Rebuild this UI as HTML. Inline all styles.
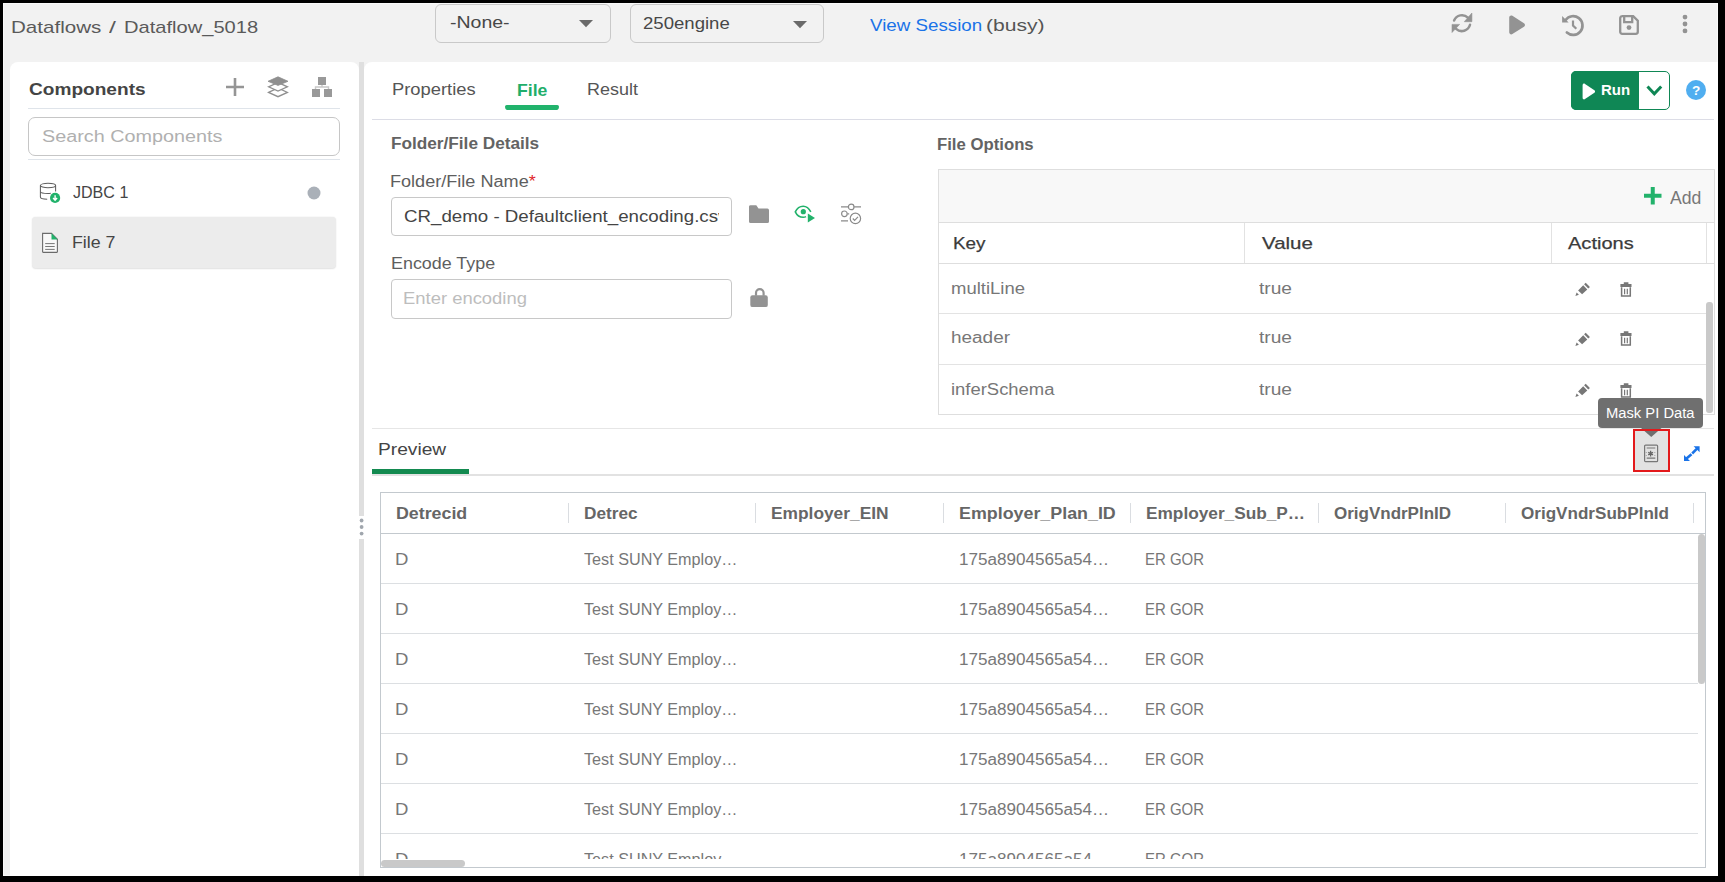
<!DOCTYPE html>
<html><head><meta charset="utf-8"><style>
html,body{margin:0;padding:0;background:#000;width:1725px;height:882px;overflow:hidden;}
body{position:relative;font-family:"Liberation Sans",sans-serif;}
.b{position:absolute;}
.t{position:absolute;white-space:nowrap;transform-origin:0 0;}
</style></head><body>
<div class="b" style="left:3px;top:3px;width:1715px;height:873px;background:#f2f2f2;box-shadow:inset 0 0 0 1px #f9f9f9;"></div>
<div id="t0" class="t " style="left:10.83px;top:17.93px;font-size:17px;line-height:19.55px;color:#5a5a5a;font-weight:400;transform:scaleX(1.2098);">Dataflows</div>
<div id="t1" class="t " style="left:109.40px;top:17.93px;font-size:17px;line-height:19.55px;color:#5a5a5a;font-weight:400;transform:scaleX(1.4583);">/</div>
<div id="t2" class="t " style="left:124.26px;top:17.93px;font-size:17px;line-height:19.55px;color:#5a5a5a;font-weight:400;transform:scaleX(1.1825);">Dataflow_5018</div>
<div class="b" style="left:435px;top:4px;width:176px;height:39px;border:1px solid #c9c9c9;border-radius:6px;box-sizing:border-box;"></div>
<div id="t3" class="t " style="left:449.55px;top:13.96px;font-size:16px;line-height:18.4px;color:#474747;font-weight:400;transform:scaleX(1.2190);">-None-</div>
<svg class="b" style="left:579px;top:20px;" width="14" height="8" viewBox="0 0 14 8"><path d="M0 0H14L7 7.2Z" fill="#6a6a6a"/></svg>
<div class="b" style="left:630px;top:4px;width:194px;height:39px;border:1px solid #c9c9c9;border-radius:6px;box-sizing:border-box;"></div>
<div id="t4" class="t " style="left:642.97px;top:14.76px;font-size:16px;line-height:18.4px;color:#474747;font-weight:400;transform:scaleX(1.1605);">250engine</div>
<svg class="b" style="left:792.5px;top:20.5px;" width="14" height="8" viewBox="0 0 14 8"><path d="M0 0H14L7 7.2Z" fill="#6a6a6a"/></svg>
<div id="t5" class="t " style="left:870.40px;top:16.33px;font-size:17px;line-height:19.55px;color:#1a73e8;font-weight:400;transform:scaleX(1.1024);">View Session</div>
<div id="t6" class="t " style="left:986.46px;top:16.33px;font-size:17px;line-height:19.55px;color:#555;font-weight:400;transform:scaleX(1.2414);">(busy)</div>
<svg class="b" style="left:1450px;top:11px;" width="24" height="24" viewBox="0 0 24 24"><g fill="none" stroke="#939393" stroke-width="2.5" stroke-linecap="round"><path d="M4.1 9.5A8.5 8.5 0 0 1 17.9 6.6"/><path d="M20 13.7A8.5 8.5 0 0 1 6.1 17.9"/></g><path d="M21.9 2V10.7H14.3Z M2 13.4H9.6L2 21.5Z" fill="#939393" stroke="#939393" stroke-width="0.6" stroke-linejoin="round"/></svg>
<svg class="b" style="left:1508px;top:15px;" width="18" height="20" viewBox="0 0 18 20"><path fill="#939393" d="M1.2 2.6C1.2 0.9 3 -0.1 4.4 0.8L16 8.2C17.3 9 17.3 10.9 16 11.7L4.4 19.1C3 20 1.2 19 1.2 17.3Z"/></svg>
<svg class="b" style="left:1561px;top:13.5px;" width="24" height="24" viewBox="0 0 24 24"><g fill="none" stroke="#939393" stroke-width="2.7"><path d="M4.6 6A9.35 9.35 0 1 1 5.9 18.5" stroke-linecap="round"/><path d="M12 6.4V11.5L15.3 14.7" stroke-width="2.2"/></g><path d="M1.1 1.9V8.4H7.6Z" fill="#939393"/></svg>
<svg class="b" style="left:1619px;top:15px;" width="20" height="20" viewBox="0 0 20 20"><g fill="none" stroke="#939393" stroke-width="2.3"><path d="M3 1.2H14.2L18.8 5.8V16.8A2 2 0 0 1 16.8 18.8H3.2A2 2 0 0 1 1.2 16.8V3.2A2 2 0 0 1 3.2 1.2Z"/><path d="M5.2 1.2V7.2H13.2V1.2"/></g><circle cx="10" cy="12.6" r="2.4" fill="#939393"/></svg>
<svg class="b" style="left:1682px;top:14px;" width="6" height="20" viewBox="0 0 6 20"><circle cx="3" cy="3.1" r="2.4" fill="#939393"/><circle cx="3" cy="10" r="2.4" fill="#939393"/><circle cx="3" cy="16.9" r="2.4" fill="#939393"/></svg>
<div class="b" style="left:10px;top:62px;width:349px;height:814px;background:#fff;border-radius:8px 8px 0 0;"></div>
<div id="t7" class="t " style="left:28.53px;top:80.03px;font-size:17px;line-height:19.55px;color:#444;font-weight:700;transform:scaleX(1.1225);">Components</div>
<svg class="b" style="left:226px;top:78px;" width="18" height="18" viewBox="0 0 18 18"><path d="M9 0V18M0 9H18" stroke="#959595" stroke-width="2.6"/></svg>
<svg class="b" style="left:267px;top:76px;" width="22" height="22" viewBox="0 0 22 22"><g stroke="#8f8f8f" stroke-width="1.3" fill="none"><path d="M1.6 16.4L11 12L20.4 16.4L11 20.7Z"/><path d="M1.6 10.8L11 6.5L20.4 10.8L11 15Z" fill="#fff"/></g><path d="M1 5.3L11 0.8L21 5.3L11 9.4Z" fill="#8f8f8f" stroke="#8f8f8f" stroke-width="0.8"/></svg>
<svg class="b" style="left:312px;top:77px;" width="20" height="20" viewBox="0 0 20 20"><path d="M10 8V10M3.5 12V10H16.5V12" stroke="#c8c8c8" stroke-width="1.4" fill="none"/><rect x="6" y="0" width="8" height="8" fill="#999"/><rect x="0" y="12" width="8" height="8" fill="#999"/><rect x="12" y="12" width="8" height="8" fill="#999"/></svg>
<div class="b" style="left:28px;top:108px;width:312px;height:1px;background:#dfe4ea;"></div>
<div class="b" style="left:28px;top:117px;width:312px;height:39px;border:1px solid #c6c6c6;border-radius:7px;box-sizing:border-box;"></div>
<div id="t8" class="t " style="left:41.93px;top:128.36px;font-size:16px;line-height:18.4px;color:#b0b0b0;font-weight:400;transform:scaleX(1.2367);">Search Components</div>
<div class="b" style="left:28px;top:159px;width:312px;height:1px;background:#dfe4ea;"></div>
<svg class="b" style="left:38px;top:181px;" width="26" height="26" viewBox="0 0 26 26"><g fill="none" stroke="#5f5f5f" stroke-width="1.05"><ellipse cx="10" cy="4.5" rx="7.6" ry="2.2"/><path d="M2.4 4.5V15.9C2.4 17.3 5.6 18.1 9.2 18.2M17.6 4.5V10.6M2.4 10.4C2.4 11.8 6 12.4 10 12.4C11 12.4 12 12.3 12.8 12.2"/></g><circle cx="17.1" cy="16.9" r="5.1" fill="#21b26b"/><path d="M17.1 14.2V19M15.1 17.1L17.1 19.2L19.1 17.1" stroke="#fff" stroke-width="1.4" fill="none"/></svg>
<div id="t9" class="t " style="left:73.41px;top:183.33px;font-size:17px;line-height:19.55px;color:#454545;font-weight:400;transform:scaleX(0.9442);">JDBC 1</div>
<svg class="b" style="left:306.5px;top:185.5px;" width="14" height="14" viewBox="0 0 14 14"><circle cx="7" cy="7" r="6.5" fill="#aab0b8"/></svg>
<div class="b" style="left:32px;top:217px;width:304px;height:51px;background:#ececec;border-radius:4px;box-shadow:0 0.5px 1.5px rgba(0,0,0,0.12);"></div>
<svg class="b" style="left:41px;top:232px;" width="18" height="22" viewBox="0 0 18 22"><path d="M1.6 1.4H10.5L16.4 7.3V19.8A0.6 0.6 0 0 1 15.8 20.4H2.2A0.6 0.6 0 0 1 1.6 19.8Z" fill="#f8f8f8" stroke="#6b6b6b" stroke-width="1.1"/><path d="M10.5 1.2V7.4H16.6Z" fill="#21b26b"/><path d="M4.2 11.6H13.7M4.2 14.5H13.7M4.2 17.4H13.7" stroke="#777" stroke-width="1"/></svg>
<div id="t10" class="t " style="left:72.24px;top:233.03px;font-size:17px;line-height:19.55px;color:#454545;font-weight:400;transform:scaleX(1.0453);">File 7</div>
<div class="b" style="left:359px;top:62px;width:5px;height:814px;background:#dfdfdf;"></div>
<div class="b" style="left:359px;top:516px;width:5px;height:23px;background:#fff;"></div>
<svg class="b" style="left:359px;top:517px;" width="5" height="22" viewBox="0 0 5 22"><circle cx="2.6" cy="3.5" r="1.9" fill="#a0a6ad"/><circle cx="2.6" cy="10" r="1.9" fill="#a0a6ad"/><circle cx="2.6" cy="16.6" r="1.9" fill="#a0a6ad"/></svg>
<div class="b" style="left:364px;top:62px;width:1354px;height:814px;background:#fff;border-radius:8px 0 0 0;"></div>
<div id="t11" class="t " style="left:392.31px;top:80.76px;font-size:16px;line-height:18.4px;color:#555;font-weight:400;transform:scaleX(1.1473);">Properties</div>
<div id="t12" class="t " style="left:516.52px;top:81.00px;font-size:16.5px;line-height:18.975px;color:#1fae6a;font-weight:700;transform:scaleX(1.0690);">File</div>
<div id="t13" class="t " style="left:587.24px;top:80.76px;font-size:16px;line-height:18.4px;color:#555;font-weight:400;transform:scaleX(1.1226);">Result</div>
<div class="b" style="left:505px;top:105px;width:54px;height:5px;background:#21b36c;border-radius:2px 2px 4px 4px;"></div>
<div class="b" style="left:372px;top:119px;width:1342px;height:1px;background:#dcdde6;"></div>
<div class="b" style="left:1571px;top:71px;width:99px;height:39px;border:1px solid #0f8755;border-radius:5px;box-sizing:border-box;background:#fff;"></div>
<div class="b" style="left:1571px;top:71px;width:68px;height:39px;background:#0f8755;border-radius:5px 0 0 5px;"></div>
<svg class="b" style="left:1581px;top:82.5px;" width="15" height="17" viewBox="0 0 15 17"><path d="M1.6 2.2C1.6 0.9 2.9 0.2 4 0.9L13.4 7.2C14.3 7.8 14.3 9.2 13.4 9.8L4 16.1C2.9 16.8 1.6 16.1 1.6 14.8Z" fill="#fff"/></svg>
<div id="t14" class="t " style="left:1601.14px;top:82.20px;font-size:14px;line-height:16.1px;color:#fff;font-weight:700;transform:scaleX(1.0722);">Run</div>
<svg class="b" style="left:1646px;top:85px;" width="17" height="12" viewBox="0 0 17 12"><path d="M1.5 1.5L8.3 8.8L15.2 1.5" fill="none" stroke="#0f8755" stroke-width="3"/></svg>
<svg class="b" style="left:1686px;top:80px;" width="20" height="20" viewBox="0 0 20 20"><circle cx="10" cy="10" r="10" fill="#50aef0"/></svg>
<div id="t15" class="t " style="left:1691.88px;top:84.42px;font-size:13px;line-height:14.95px;color:#fff;font-weight:700;transform:scaleX(1.0448);">?</div>
<div id="t16" class="t " style="left:390.93px;top:135.16px;font-size:16px;line-height:18.4px;color:#636363;font-weight:700;transform:scaleX(1.0748);">Folder/File Details</div>
<div id="t17" class="t " style="left:937.35px;top:135.56px;font-size:16px;line-height:18.4px;color:#636363;font-weight:700;transform:scaleX(1.0457);">File Options</div>
<div id="t18" class="t " style="left:389.93px;top:172.86px;font-size:16px;line-height:18.4px;color:#5e5e5e;font-weight:400;transform:scaleX(1.1303);">Folder/File Name<span style="color:#e0262c">*</span></div>
<div class="b" style="left:391px;top:197px;width:341px;height:39px;border:1px solid #c8c8c8;border-radius:4px;box-sizing:border-box;"></div>
<div class="b" style="left:392px;top:198px;width:327.3px;height:36px;overflow:hidden;"><div id="t19" class="t " style="left:12.06px;top:10.16px;font-size:16px;line-height:18.4px;color:#444;font-weight:400;transform:scaleX(1.1692);">CR_demo - Defaultclient_encoding.cs</div><div id="t20" class="t " style="left:326.10px;top:10.16px;font-size:16px;line-height:18.4px;color:#444;font-weight:400;transform:scaleX(1.1250);">v</div></div>
<svg class="b" style="left:749px;top:204.5px;" width="20" height="18.5" viewBox="0 0 20 18.5"><path d="M0 2A1.6 1.6 0 0 1 1.6 0.3H7.3L9.5 3.6H18.4A1.6 1.6 0 0 1 20 5.2V16.4A1.6 1.6 0 0 1 18.4 18H1.6A1.6 1.6 0 0 1 0 16.4Z" fill="#939393"/></svg>
<svg class="b" style="left:794px;top:205px;" width="22" height="18" viewBox="0 0 22 18"><path d="M16.8 6.8C15 3.3 12.3 1.2 9.2 1.2C5.5 1.2 2.6 4 1.3 6.8C2.6 9.6 5.4 12.3 9.2 12.3C10.2 12.3 11.3 12 12 11.6" fill="none" stroke="#22b26b" stroke-width="1.6"/><circle cx="9.3" cy="6.7" r="2.6" fill="#22b26b"/><path d="M13.8 8.5L21 13L13.8 17.4Z" fill="#22b26b"/></svg>
<svg class="b" style="left:840px;top:202px;" width="22" height="24" viewBox="0 0 22 24"><g fill="none" stroke="#8a8a8a" stroke-width="1.2"><path d="M1 4.9H8.2M14.1 4.9H21M7.5 11.8H9.2M1 18.8H8"/><circle cx="11.2" cy="4.9" r="2.8"/><circle cx="4.4" cy="11.8" r="2.8"/><circle cx="15.4" cy="16.4" r="5.2"/><path d="M12.8 16.5L14.6 18.3L18 14.8"/></g></svg>
<div id="t21" class="t " style="left:390.85px;top:255.06px;font-size:16px;line-height:18.4px;color:#5e5e5e;font-weight:400;transform:scaleX(1.1182);">Encode Type</div>
<div class="b" style="left:391px;top:279px;width:341px;height:40px;border:1px solid #c8c8c8;border-radius:4px;box-sizing:border-box;"></div>
<div id="t22" class="t " style="left:403.20px;top:290.06px;font-size:16px;line-height:18.4px;color:#bdbdbd;font-weight:400;transform:scaleX(1.1516);">Enter encoding</div>
<svg class="b" style="left:750px;top:286.5px;" width="18.5" height="21" viewBox="0 0 18.5 21"><path d="M6 8.8V6A3.8 3.8 0 0 1 13.6 6V8.8" fill="none" stroke="#939393" stroke-width="2.2"/><rect x="0.3" y="8.3" width="17.5" height="11.8" rx="2.2" fill="#939393"/></svg>
<div class="b" style="left:938px;top:169px;width:777px;height:246px;border:1px solid #dedede;box-sizing:border-box;"></div>
<div class="b" style="left:939px;top:170px;width:775px;height:52px;background:#f8f8f8;"></div>
<div class="b" style="left:939px;top:222px;width:775px;height:1px;background:#dedede;"></div>
<svg class="b" style="left:1643.5px;top:187.2px;" width="18" height="18" viewBox="0 0 18 18"><path d="M8.75 0V17.5M0 8.75H17.5" stroke="#22b26b" stroke-width="4"/></svg>
<div id="t23" class="t " style="left:1670.40px;top:187.57px;font-size:17.5px;line-height:20.125px;color:#777;font-weight:400;transform:scaleX(1.0065);">Add</div>
<div id="t24" class="t " style="left:953.26px;top:234.23px;font-size:17px;line-height:19.55px;color:#3b3b3b;font-weight:400;transform:scaleX(1.1074);-webkit-text-stroke:0.25px #3b3b3b;">Key</div>
<div id="t25" class="t " style="left:1261.90px;top:234.23px;font-size:17px;line-height:19.55px;color:#3b3b3b;font-weight:400;transform:scaleX(1.2059);-webkit-text-stroke:0.25px #3b3b3b;">Value</div>
<div id="t26" class="t " style="left:1568.40px;top:234.23px;font-size:17px;line-height:19.55px;color:#3b3b3b;font-weight:400;transform:scaleX(1.1786);-webkit-text-stroke:0.25px #3b3b3b;">Actions</div>
<div class="b" style="left:1244px;top:223px;width:1px;height:40px;background:#e2e2e2;"></div>
<div class="b" style="left:1551px;top:223px;width:1px;height:40px;background:#e2e2e2;"></div>
<div class="b" style="left:1706px;top:223px;width:1px;height:40px;background:#e2e2e2;"></div>
<div class="b" style="left:939px;top:263px;width:775px;height:1px;background:#dedede;"></div>
<div id="t27" class="t " style="left:950.74px;top:279.96px;font-size:16px;line-height:18.4px;color:#777;font-weight:400;transform:scaleX(1.1551);">multiLine</div>
<div id="t28" class="t " style="left:1258.56px;top:279.96px;font-size:16px;line-height:18.4px;color:#777;font-weight:400;transform:scaleX(1.1960);">true</div>
<svg class="b" style="left:1574.5px;top:282.1px;" width="16" height="15" viewBox="0 0 16 15"><path d="M0.4 14L1.6 10.5L3.9 12.8Z M3.1 8.4L8.2 3.3L12.3 7.4L7.1 12.3Z" fill="#777"/><path d="M9.9 1.5L14.1 5.7" stroke="#777" stroke-width="2.3"/></svg>
<svg class="b" style="left:1619.5px;top:281.8px;" width="12" height="15" viewBox="0 0 12 15"><path d="M3.8 0.3H8.4V2H11.5V4.9H0.4V2H3.8Z" fill="#777"/><path d="M1.6 5.2V14.1H10.3V5.2" fill="none" stroke="#777" stroke-width="1.5"/><path d="M4.6 6.8V12.2M7.3 6.8V12.2" stroke="#777" stroke-width="1.2"/></svg>
<div class="b" style="left:939px;top:313px;width:767px;height:1px;background:#e3e3e3;"></div>
<div id="t29" class="t " style="left:950.60px;top:329.46px;font-size:16px;line-height:18.4px;color:#777;font-weight:400;transform:scaleX(1.1837);">header</div>
<div id="t30" class="t " style="left:1258.56px;top:329.46px;font-size:16px;line-height:18.4px;color:#777;font-weight:400;transform:scaleX(1.1960);">true</div>
<svg class="b" style="left:1574.5px;top:331.6px;" width="16" height="15" viewBox="0 0 16 15"><path d="M0.4 14L1.6 10.5L3.9 12.8Z M3.1 8.4L8.2 3.3L12.3 7.4L7.1 12.3Z" fill="#777"/><path d="M9.9 1.5L14.1 5.7" stroke="#777" stroke-width="2.3"/></svg>
<svg class="b" style="left:1619.5px;top:331.3px;" width="12" height="15" viewBox="0 0 12 15"><path d="M3.8 0.3H8.4V2H11.5V4.9H0.4V2H3.8Z" fill="#777"/><path d="M1.6 5.2V14.1H10.3V5.2" fill="none" stroke="#777" stroke-width="1.5"/><path d="M4.6 6.8V12.2M7.3 6.8V12.2" stroke="#777" stroke-width="1.2"/></svg>
<div class="b" style="left:939px;top:364px;width:767px;height:1px;background:#e3e3e3;"></div>
<div id="t31" class="t " style="left:950.75px;top:380.66px;font-size:16px;line-height:18.4px;color:#777;font-weight:400;transform:scaleX(1.1517);">inferSchema</div>
<div id="t32" class="t " style="left:1258.56px;top:380.66px;font-size:16px;line-height:18.4px;color:#777;font-weight:400;transform:scaleX(1.1960);">true</div>
<svg class="b" style="left:1574.5px;top:382.8px;" width="16" height="15" viewBox="0 0 16 15"><path d="M0.4 14L1.6 10.5L3.9 12.8Z M3.1 8.4L8.2 3.3L12.3 7.4L7.1 12.3Z" fill="#777"/><path d="M9.9 1.5L14.1 5.7" stroke="#777" stroke-width="2.3"/></svg>
<svg class="b" style="left:1619.5px;top:382.5px;" width="12" height="15" viewBox="0 0 12 15"><path d="M3.8 0.3H8.4V2H11.5V4.9H0.4V2H3.8Z" fill="#777"/><path d="M1.6 5.2V14.1H10.3V5.2" fill="none" stroke="#777" stroke-width="1.5"/><path d="M4.6 6.8V12.2M7.3 6.8V12.2" stroke="#777" stroke-width="1.2"/></svg>
<div class="b" style="left:1706px;top:301.5px;width:7px;height:111.5px;background:#c9c9c9;border-radius:3px;"></div>
<div class="b" style="left:372px;top:428px;width:1342px;height:1px;background:#e6e6e6;"></div>
<div id="t33" class="t " style="left:377.94px;top:440.13px;font-size:17px;line-height:19.55px;color:#444;font-weight:400;transform:scaleX(1.1267);">Preview</div>
<div class="b" style="left:372px;top:469px;width:97px;height:5px;background:#138a50;"></div>
<div class="b" style="left:469px;top:474px;width:1245px;height:2px;background:#e2e2e2;"></div>
<div class="b" style="left:372px;top:474px;width:97px;height:2px;background:#e2e2e2;"></div>
<svg class="b" style="left:1683px;top:445px;" width="18" height="17" viewBox="0 0 18 17"><path d="M15 2.7L9.2 8.5M8.5 9.2L2.6 14.3" stroke="#1a73e8" stroke-width="2.5"/><path d="M1 9.9V15.9H7Z M16.6 7.2V1.2H10.6Z" fill="#1a73e8"/></svg>
<div class="b" style="left:1598px;top:398px;width:105px;height:29.600000000000023px;background:#6f6f6f;border-radius:4px;"></div>
<div class="b" style="left:1633px;top:429px;width:37px;height:42.5px;background:#e2e2e2;"></div>
<svg class="b" style="left:1640.5px;top:427.6px;" width="21" height="10" viewBox="0 0 21 10"><path d="M0 0H20.5L10.25 8.9Z" fill="#6f6f6f"/></svg>
<div class="b" style="left:1633px;top:429px;width:37px;height:42.5px;border:2.2px solid #e3191b;box-sizing:border-box;"></div>
<svg class="b" style="left:1643px;top:443.5px;" width="16" height="19" viewBox="0 0 16 19"><rect x="1.6" y="1.1" width="13" height="16.6" rx="1" fill="none" stroke="#777" stroke-width="1.2"/><path d="M3.7 4H12.3M3.7 14.1H12.3" stroke="#777" stroke-width="1.1"/><path d="M3.3 8V8.8M11.8 8V8.8M3.3 11V11.8M11.8 11V11.8" stroke="#888" stroke-width="0.9"/><path d="M7.6 6.8V12.4M5.2 8.4L10 10.9M10 8.4L5.2 10.9" stroke="#666" stroke-width="1.3"/></svg>
<div id="t34" class="t " style="left:1606.24px;top:405.20px;font-size:14px;line-height:16.1px;color:#fff;font-weight:400;transform:scaleX(1.0538);">Mask PI Data</div>
<div class="b" style="left:380px;top:492px;width:1326px;height:376px;border:1px solid #c3c9ce;box-sizing:border-box;"></div>
<div class="b" style="left:381px;top:533px;width:1324px;height:1px;background:#c3c9ce;"></div>
<div class="b" style="left:568px;top:503px;width:1px;height:20px;background:#dadde1;"></div>
<div class="b" style="left:755px;top:503px;width:1px;height:20px;background:#dadde1;"></div>
<div class="b" style="left:943px;top:503px;width:1px;height:20px;background:#dadde1;"></div>
<div class="b" style="left:1130px;top:503px;width:1px;height:20px;background:#dadde1;"></div>
<div class="b" style="left:1318px;top:503px;width:1px;height:20px;background:#dadde1;"></div>
<div class="b" style="left:1505px;top:503px;width:1px;height:20px;background:#dadde1;"></div>
<div class="b" style="left:1693px;top:503px;width:1px;height:20px;background:#dadde1;"></div>
<div id="t35" class="t " style="left:396.09px;top:505.16px;font-size:16px;line-height:18.4px;color:#666;font-weight:700;transform:scaleX(1.1120);">Detrecid</div>
<div id="t36" class="t " style="left:583.63px;top:505.16px;font-size:16px;line-height:18.4px;color:#666;font-weight:700;transform:scaleX(1.0742);">Detrec</div>
<div id="t37" class="t " style="left:771.02px;top:505.16px;font-size:16px;line-height:18.4px;color:#666;font-weight:700;transform:scaleX(1.0833);">Employer_EIN</div>
<div id="t38" class="t " style="left:958.78px;top:505.16px;font-size:16px;line-height:18.4px;color:#666;font-weight:700;transform:scaleX(1.1156);">Employer_Plan_ID</div>
<div id="t39" class="t " style="left:1145.62px;top:505.16px;font-size:16px;line-height:18.4px;color:#666;font-weight:700;transform:scaleX(1.0780);">Employer_Sub_P…</div>
<div id="t40" class="t " style="left:1333.76px;top:505.16px;font-size:16px;line-height:18.4px;color:#666;font-weight:700;transform:scaleX(1.0617);">OrigVndrPlnID</div>
<div id="t41" class="t " style="left:1521.36px;top:505.16px;font-size:16px;line-height:18.4px;color:#666;font-weight:700;transform:scaleX(1.0672);">OrigVndrSubPlnId</div>
<div class="b" style="left:381px;top:534px;width:1317px;height:325px;overflow:hidden;">
<div id="t42" class="t " style="left:14.39px;top:16.86px;font-size:16px;line-height:18.4px;color:#777;font-weight:400;transform:scaleX(1.1579);">D</div>
<div id="t43" class="t " style="left:203.10px;top:16.86px;font-size:16px;line-height:18.4px;color:#777;font-weight:400;transform:scaleX(1.0111);">Test SUNY Employ…</div>
<div id="t44" class="t " style="left:577.62px;top:16.86px;font-size:16px;line-height:18.4px;color:#777;font-weight:400;transform:scaleX(1.0672);">175a8904565a54…</div>
<div id="t45" class="t " style="left:764.48px;top:16.86px;font-size:16px;line-height:18.4px;color:#777;font-weight:400;transform:scaleX(0.9352);">ER GOR</div>
<div class="b" style="left:0px;top:49px;width:1317px;height:1px;background:#dcdfe2;"></div>
<div id="t46" class="t " style="left:14.39px;top:66.86px;font-size:16px;line-height:18.4px;color:#777;font-weight:400;transform:scaleX(1.1579);">D</div>
<div id="t47" class="t " style="left:203.10px;top:66.86px;font-size:16px;line-height:18.4px;color:#777;font-weight:400;transform:scaleX(1.0111);">Test SUNY Employ…</div>
<div id="t48" class="t " style="left:577.62px;top:66.86px;font-size:16px;line-height:18.4px;color:#777;font-weight:400;transform:scaleX(1.0672);">175a8904565a54…</div>
<div id="t49" class="t " style="left:764.48px;top:66.86px;font-size:16px;line-height:18.4px;color:#777;font-weight:400;transform:scaleX(0.9352);">ER GOR</div>
<div class="b" style="left:0px;top:99px;width:1317px;height:1px;background:#dcdfe2;"></div>
<div id="t50" class="t " style="left:14.39px;top:116.86px;font-size:16px;line-height:18.4px;color:#777;font-weight:400;transform:scaleX(1.1579);">D</div>
<div id="t51" class="t " style="left:203.10px;top:116.86px;font-size:16px;line-height:18.4px;color:#777;font-weight:400;transform:scaleX(1.0111);">Test SUNY Employ…</div>
<div id="t52" class="t " style="left:577.62px;top:116.86px;font-size:16px;line-height:18.4px;color:#777;font-weight:400;transform:scaleX(1.0672);">175a8904565a54…</div>
<div id="t53" class="t " style="left:764.48px;top:116.86px;font-size:16px;line-height:18.4px;color:#777;font-weight:400;transform:scaleX(0.9352);">ER GOR</div>
<div class="b" style="left:0px;top:149px;width:1317px;height:1px;background:#dcdfe2;"></div>
<div id="t54" class="t " style="left:14.39px;top:166.86px;font-size:16px;line-height:18.4px;color:#777;font-weight:400;transform:scaleX(1.1579);">D</div>
<div id="t55" class="t " style="left:203.10px;top:166.86px;font-size:16px;line-height:18.4px;color:#777;font-weight:400;transform:scaleX(1.0111);">Test SUNY Employ…</div>
<div id="t56" class="t " style="left:577.62px;top:166.86px;font-size:16px;line-height:18.4px;color:#777;font-weight:400;transform:scaleX(1.0672);">175a8904565a54…</div>
<div id="t57" class="t " style="left:764.48px;top:166.86px;font-size:16px;line-height:18.4px;color:#777;font-weight:400;transform:scaleX(0.9352);">ER GOR</div>
<div class="b" style="left:0px;top:199px;width:1317px;height:1px;background:#dcdfe2;"></div>
<div id="t58" class="t " style="left:14.39px;top:216.86px;font-size:16px;line-height:18.4px;color:#777;font-weight:400;transform:scaleX(1.1579);">D</div>
<div id="t59" class="t " style="left:203.10px;top:216.86px;font-size:16px;line-height:18.4px;color:#777;font-weight:400;transform:scaleX(1.0111);">Test SUNY Employ…</div>
<div id="t60" class="t " style="left:577.62px;top:216.86px;font-size:16px;line-height:18.4px;color:#777;font-weight:400;transform:scaleX(1.0672);">175a8904565a54…</div>
<div id="t61" class="t " style="left:764.48px;top:216.86px;font-size:16px;line-height:18.4px;color:#777;font-weight:400;transform:scaleX(0.9352);">ER GOR</div>
<div class="b" style="left:0px;top:249px;width:1317px;height:1px;background:#dcdfe2;"></div>
<div id="t62" class="t " style="left:14.39px;top:266.86px;font-size:16px;line-height:18.4px;color:#777;font-weight:400;transform:scaleX(1.1579);">D</div>
<div id="t63" class="t " style="left:203.10px;top:266.86px;font-size:16px;line-height:18.4px;color:#777;font-weight:400;transform:scaleX(1.0111);">Test SUNY Employ…</div>
<div id="t64" class="t " style="left:577.62px;top:266.86px;font-size:16px;line-height:18.4px;color:#777;font-weight:400;transform:scaleX(1.0672);">175a8904565a54…</div>
<div id="t65" class="t " style="left:764.48px;top:266.86px;font-size:16px;line-height:18.4px;color:#777;font-weight:400;transform:scaleX(0.9352);">ER GOR</div>
<div class="b" style="left:0px;top:299px;width:1317px;height:1px;background:#dcdfe2;"></div>
<div id="t66" class="t " style="left:14.39px;top:316.86px;font-size:16px;line-height:18.4px;color:#777;font-weight:400;transform:scaleX(1.1579);">D</div>
<div id="t67" class="t " style="left:203.10px;top:316.86px;font-size:16px;line-height:18.4px;color:#777;font-weight:400;transform:scaleX(1.0111);">Test SUNY Employ…</div>
<div id="t68" class="t " style="left:577.62px;top:316.86px;font-size:16px;line-height:18.4px;color:#777;font-weight:400;transform:scaleX(1.0672);">175a8904565a54…</div>
<div id="t69" class="t " style="left:764.48px;top:316.86px;font-size:16px;line-height:18.4px;color:#777;font-weight:400;transform:scaleX(0.9352);">ER GOR</div>
</div>
<div class="b" style="left:1698px;top:534px;width:7px;height:150px;background:#c9c9c9;border-radius:4px;"></div>
<div class="b" style="left:381px;top:860px;width:84px;height:7px;background:#c9c9c9;border-radius:4px;"></div>
</body></html>
